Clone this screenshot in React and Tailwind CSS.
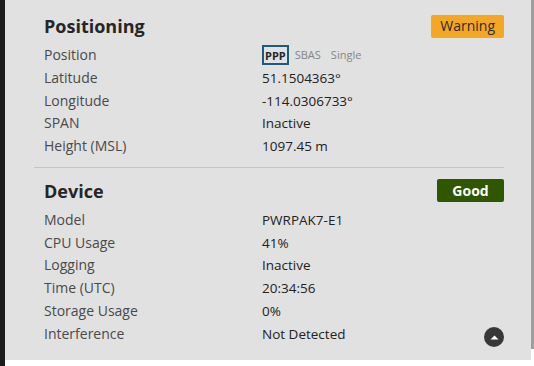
import React from "react";

function Row({ label, children }) {
  return (
    <div className="flex h-[22.75px] items-center leading-[22.75px]">
      <div className="w-[218px] shrink-0 text-[14px] text-[#4a4a4a]">{label}</div>
      <div className="flex items-center text-[13.5px] text-[#222222]">{children}</div>
    </div>
  );
}

function Section({ title, badge, rows }) {
  return (
    <div className="pl-[10px]">
      <div className="flex h-[24px] items-center justify-between">
        <div className="text-[18px] font-bold leading-[24px] text-[#262626]">{title}</div>
        {badge}
      </div>
      <div className="mt-[6px]">
        {rows.map(([l, v]) => (
          <Row key={l} label={l}>
            {v}
          </Row>
        ))}
      </div>
    </div>
  );
}

export default function App() {
  const font = { fontFamily: '"Open Sans", "Liberation Sans", sans-serif' };
  const posRows = [
    [
      "Position",
      <div className="flex items-center">
        <span className="flex h-[20px] items-center border-2 border-[#1b5b7c] px-[1px] text-[11px] font-bold leading-none text-[#262626]">
          PPP
        </span>
        <span className="ml-[6px] text-[11px] text-[#858585]">SBAS</span>
        <span className="ml-[10px] text-[11px] text-[#858585]">Single</span>
      </div>,
    ],
    ["Latitude", "51.1504363°"],
    ["Longitude", "-114.0306733°"],
    ["SPAN", "Inactive"],
    ["Height (MSL)", "1097.45 m"],
  ];
  const devRows = [
    ["Model", "PWRPAK7-E1"],
    ["CPU Usage", "41%"],
    ["Logging", "Inactive"],
    ["Time (UTC)", "20:34:56"],
    ["Storage Usage", "0%"],
    ["Interference", "Not Detected"],
  ];
  return (
    <div className="flex h-[366px] w-[534px] bg-white" style={font}>
      <div className="h-full w-[5px] bg-[#1c1c1c]" />
      <div className="relative h-[360px] w-[526px] bg-[#e1e1e1] pl-[29px] pr-[27px] pt-[14px]">
        <Section
          title="Positioning"
          badge={
            <span className="flex h-[23px] items-center rounded-[2px] bg-[#f5a623] px-[9px] text-[14px] leading-none text-[#2b2b2b]">
              Warning
            </span>
          }
          rows={posRows}
        />
        <div className="mt-[9.5px] h-px bg-[#c4c4c4]" />
        <div className="mt-[10.5px]">
          <Section
            title="Device"
            badge={
              <span className="flex h-[23px] w-[67px] items-center justify-center rounded-[2px] bg-[#2e5700] text-[14px] font-bold leading-none text-white">
                Good
              </span>
            }
            rows={devRows}
          />
        </div>
        <div className="absolute left-[479px] top-[327px] flex h-[20px] w-[20px] items-center justify-center rounded-full bg-[#383838]">
          <svg width="9" height="5" viewBox="0 0 9 5">
            <path d="M0.5 4.5 L4.5 0.5 L8.5 4.5 Z" fill="#ffffff" />
          </svg>
        </div>
      </div>
      <div className="h-[349px] w-[3px] bg-[#9e9e9e]" />
    </div>
  );
}
